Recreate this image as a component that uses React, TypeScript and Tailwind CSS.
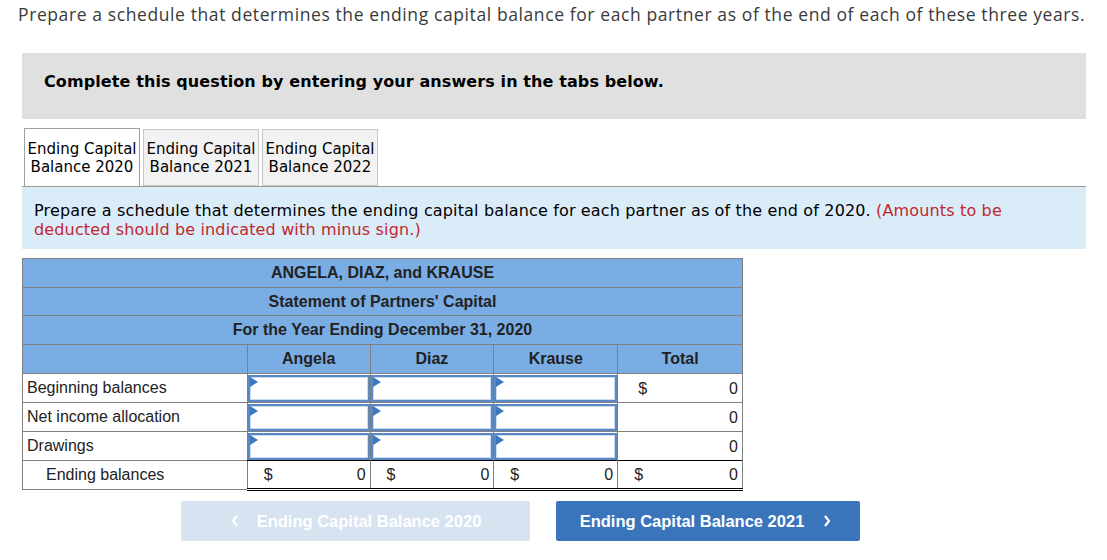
import React from "react"

const verdana = { fontFamily: '"DejaVu Sans", Verdana, sans-serif' }

const InputCell = () => (
  <td className="border border-[#808080] p-0 bg-white">
    <div className="relative h-[27px] border-2 border-[#5b88c2] bg-white">
      <div className="absolute inset-0 border border-[#c9dcf1]" />
      <div className="absolute left-0 top-0 w-0 h-0 border-t-[5px] border-b-[5px] border-l-[8px] border-t-transparent border-b-transparent border-l-[#3c78c0]" />
    </div>
  </td>
)

const rows = ["Beginning balances", "Net income allocation", "Drawings"]

export default function App() {
  return (
    <div className="w-[1107px] h-[560px] bg-white overflow-hidden text-[#333]">
      <p className="pl-[18px] pt-[2px] text-[17.5px] tracking-[0.6px] leading-[24px] text-[#3a3a3a] whitespace-nowrap" style={{ fontFamily: '"Open Sans", sans-serif' }}>
        Prepare a schedule that determines the ending capital balance for each partner as of the end of each of these three years.
      </p>

      <div className="ml-[22px] mt-[27px] w-[1064px] h-[66px] bg-[#e0e0e0] pl-[22px] pt-[16px]">
        <span className="font-bold text-[16px] tracking-[0.1px] leading-[20px] text-black" style={verdana}>
          Complete this question by entering your answers in the tabs below.
        </span>
      </div>

      <div className="flex ml-[24px] mt-[9px] gap-[3px] items-end">
        <div className="w-[116px] h-[58px] border border-[#a0a0a0] border-b-0 bg-white flex items-center justify-center text-center text-[15px] leading-[18px] text-black whitespace-nowrap" style={verdana}>
          Ending Capital<br />Balance 2020
        </div>
        <div className="w-[116px] h-[57px] border border-[#c8c8c8] bg-[#f2f2f2] flex items-center justify-center text-center text-[15px] leading-[18px] text-black whitespace-nowrap" style={verdana}>
          Ending Capital<br />Balance 2021
        </div>
        <div className="w-[116px] h-[57px] border border-[#c8c8c8] bg-[#f2f2f2] flex items-center justify-center text-center text-[15px] leading-[18px] text-black whitespace-nowrap" style={verdana}>
          Ending Capital<br />Balance 2022
        </div>
      </div>

      <div className="ml-[22px] w-[1064px] h-[63px] bg-[#dbecf9] border-t border-[#999] pl-[12px] pr-[70px] pt-[14px] text-[16px] tracking-[0.15px] leading-[19px] text-black" style={verdana}>
        Prepare a schedule that determines the ending capital balance for each partner as of the end of 2020.{" "}
        <span className="text-[#c1272d]">(Amounts to be deducted should be indicated with minus sign.)</span>
      </div>

      <table className="ml-[22px] mt-[9px] w-[721px] border-collapse text-[16px] text-[#222]" style={{ fontFamily: '"Liberation Sans", Arial, sans-serif' }}>
        <colgroup>
          <col className="w-[225px]" />
          <col className="w-[123px]" />
          <col className="w-[124px]" />
          <col className="w-[124px]" />
          <col className="w-[125px]" />
        </colgroup>
        <thead className="bg-[#7aade4] font-bold">
          <tr className="h-[29px]">
            <th colSpan={5} className="border border-[#808080] font-bold">ANGELA, DIAZ, and KRAUSE</th>
          </tr>
          <tr className="h-[28px]">
            <th colSpan={5} className="border border-[#808080] font-bold">Statement of Partners' Capital</th>
          </tr>
          <tr className="h-[29px]">
            <th colSpan={5} className="border border-[#808080] font-bold">For the Year Ending December 31, 2020</th>
          </tr>
          <tr className="h-[29px]">
            <th className="border border-[#808080]"></th>
            <th className="border border-[#808080] font-bold">Angela</th>
            <th className="border border-[#808080] font-bold">Diaz</th>
            <th className="border border-[#808080] font-bold">Krause</th>
            <th className="border border-[#808080] font-bold">Total</th>
          </tr>
        </thead>
        <tbody>
          {rows.map((label, i) => (
            <tr key={label} className="h-[29px]">
              <td className="border border-[#808080] pl-[4px]">{label}</td>
              <InputCell />
              <InputCell />
              <InputCell />
              <td className="border border-[#808080] px-[4px] pt-[2px]">
                <div className="flex justify-between pl-[16px]">
                  <span>{i === 0 ? "$" : ""}</span>
                  <span>0</span>
                </div>
              </td>
            </tr>
          ))}
          <tr className="h-[29px]">
            <td className="border border-[#808080] pl-[23px]">Ending balances</td>
            {[0, 1, 2, 3].map((k) => (
              <td key={k} className="border-x border-x-[#808080] border-t border-t-black border-b-[3px] border-b-black border-double px-[4px]">
                <div className="flex justify-between pl-[12px]">
                  <span>$</span>
                  <span>0</span>
                </div>
              </td>
            ))}
          </tr>
        </tbody>
      </table>

      <div className="flex mt-[10px] ml-[181px] gap-[26px]" style={{ fontFamily: '"Liberation Sans", Arial, sans-serif' }}>
        <button className="w-[349px] h-[40px] rounded-[2px] bg-[#d7e3f1] text-white font-bold text-[16.5px] flex items-center justify-center gap-[17px]">
          <svg width="10" height="14" viewBox="0 0 10 14"><path d="M7 2L3 7l4 5" fill="none" stroke="white" strokeWidth="2.2" /></svg>
          <span>Ending Capital Balance 2020</span>
        </button>
        <button className="w-[304px] h-[40px] rounded-[2px] bg-[#3a75bb] text-white font-bold text-[16.5px] flex items-center justify-center gap-[18px] pr-[4px]">
          <span>Ending Capital Balance 2021</span>
          <svg width="10" height="14" viewBox="0 0 10 14"><path d="M3 2l4 5-4 5" fill="none" stroke="white" strokeWidth="2.2" /></svg>
        </button>
      </div>
    </div>
  )
}
